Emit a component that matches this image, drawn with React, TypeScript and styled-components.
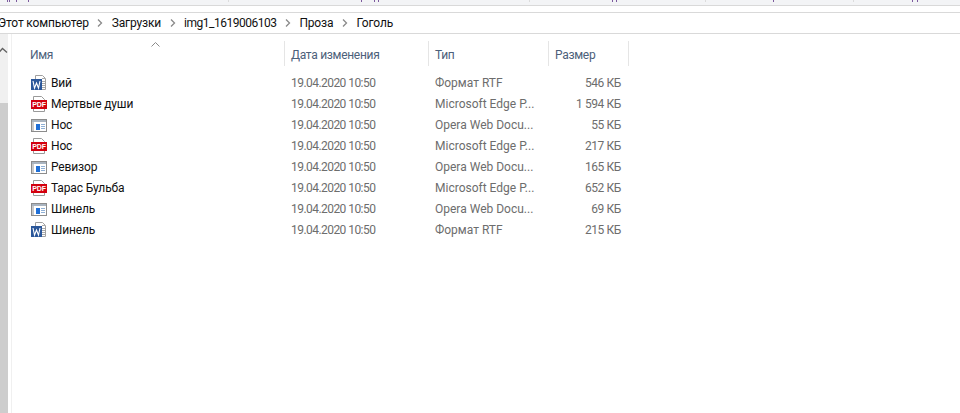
import styled, { createGlobalStyle } from "styled-components";

const GlobalStyle = createGlobalStyle`
  html, body {
    margin: 0;
    padding: 0;
    background: #fff;
    overflow: hidden;
  }

  body {
    font-family: Roboto, "Noto Sans", sans-serif;
  }
`;

const Page = styled.div`
  width: 960px;
  height: 413px;
  display: flex;
  flex-direction: column;
  overflow: hidden;
  background: #fff;
`;

const Ribbon = styled.div`
  height: 5px;
  flex: none;
  display: flex;
  position: relative;
  background: #f3f4f6;
  border-bottom: 1px solid #d9d9d9;
`;

const RibbonGroup = styled.div<{ $w: number }>`
  width: ${(p) => p.$w}px;
  height: 2px;
  flex: none;
  border-right: 1px solid #dcdcdc;
`;

const RibbonTick = styled.i<{ $x: number }>`
  position: absolute;
  left: ${(p) => p.$x}px;
  top: 0;
  width: 1px;
  height: 2px;
  background: #7d5a9e;
`;

const Crumbs = styled.div`
  height: 20px;
  flex: none;
  margin-top: 6px;
  display: flex;
  align-items: center;
  border-top: 1px solid #d9d9d9;
  border-bottom: 1px solid #d9d9d9;
  font-size: 12px;
  color: #111;
  white-space: nowrap;
`;

const CrumbList = styled.div`
  display: flex;
  align-items: center;
  margin-left: -2px;
`;

const Crumb = styled.span<{ $tight?: boolean }>`
  letter-spacing: ${(p) => (p.$tight ? "-0.5px" : "-0.15px")};
`;

const Chevron = styled.span`
  width: 23px;
  display: flex;
  justify-content: center;
`;

const Body = styled.div`
  flex: 1;
  display: flex;
  min-height: 0;
`;

const Scrollbar = styled.div`
  width: 8px;
  flex: none;
  display: flex;
  flex-direction: column;
  background: #f0f0f0;
`;

const ScrollArrow = styled.div`
  height: 69px;
  flex: none;
  padding-top: 13px;
  box-sizing: border-box;
  display: flex;
  justify-content: flex-start;
`;

const ScrollThumb = styled.div`
  flex: 1;
  background: #cdcdcd;
`;

const Files = styled.div`
  flex: 1;
  margin-left: 3px;
  border-left: 1px solid #f0f0f0;
  min-width: 0;
`;

const Header = styled.div`
  position: relative;
  height: 25px;
  margin-top: 7px;
  display: flex;
  color: #4c607a;
  font-size: 12px;
  letter-spacing: -0.3px;
`;

const SortMark = styled.svg`
  position: absolute;
  left: 139px;
  top: 1px;
`;

const HeaderCell = styled.div<{ $w: number }>`
  width: ${(p) => p.$w}px;
  box-sizing: border-box;
  padding: 6px 0 0 6px;
  border-right: 1px solid #e5e5e5;
  flex: none;
  line-height: 16px;

  &:first-of-type {
    padding-left: 18px;
  }
`;

const Rows = styled.div`
  margin-top: 6px;
  display: flex;
  flex-direction: column;
`;

const Row = styled.div`
  height: 21px;
  display: flex;
  align-items: center;
  font-size: 12px;
  color: #6d6d6d;
  white-space: nowrap;
`;

const NameCell = styled.div`
  width: 279px;
  flex: none;
  display: flex;
  align-items: center;
  gap: 4px;
  padding-left: 19px;
  box-sizing: border-box;
  color: #111;
  letter-spacing: -0.15px;
`;

const DateCell = styled.div`
  width: 144px;
  flex: none;
  letter-spacing: -0.55px;
`;

const TypeCell = styled.div`
  width: 120px;
  flex: none;
`;

const SizeCell = styled.div`
  width: 66px;
  flex: none;
  text-align: right;
  letter-spacing: -0.4px;
`;

type Kind = "word" | "pdf" | "opera";

const WordIcon = () => (
  <svg width="16" height="16" viewBox="0 0 16 16">
    <path d="M4.5.5h7l3 3v11h-10z" fill="#fff" stroke="#a0a0a0" />
    <path d="M11 3.5h3M11 6.500h3M11 8.500h3M11 10.500h3M11 12.500h3" stroke="#a9a9a9" />
    <rect x="0" y="4" width="11" height="11" fill="#2b579a" />
    <path d="M2 6l1.500 7 2-5 2 5L9 6" fill="none" stroke="#fff" strokeWidth="1.100" />
  </svg>
);

const PdfIcon = () => (
  <svg width="16" height="16" viewBox="0 0 16 16">
    <path d="M2.500.5h8l3 3v1h-11z" fill="#fff" stroke="#9a9a9a" />
    <path d="M2.500 12.500h11v3h-11z" fill="#fff" stroke="#9a9a9a" />
    <rect x="0" y="4" width="16" height="9" fill="#d3000f" />
    <text x="8" y="11" textAnchor="middle" fontFamily="Liberation Sans, sans-serif" fontWeight="700" fontSize="7" fill="#fff">
      PDF
    </text>
  </svg>
);

const OperaIcon = () => (
  <svg width="16" height="16" viewBox="0 0 16 16">
    <rect x="0.500" y="2.500" width="15" height="12" fill="#fff" stroke="#8c8c8c" />
    <rect x="1" y="3" width="14" height="2" fill="#a9b4c0" />
    <rect x="1" y="5" width="2" height="9" fill="#c9c9c9" />
    <rect x="5" y="7" width="4" height="6" fill="#1f6fd6" />
    <path d="M10 7.500h4M10 9.500h4M10 11.500h4" stroke="#8fb0d6" />
  </svg>
);

const icons: Record<Kind, () => React.JSX.Element> = {
  word: WordIcon,
  pdf: PdfIcon,
  opera: OperaIcon,
};

const ribbonGroups = [228, 300, 175, 147];
const ribbonTicks = [7, 9, 16, 28, 361, 374, 378, 612, 616, 773, 912, 917];

const path = ["Этот компьютер", "Загрузки", "img1_1619006103", "Проза", "Гоголь"];

const files: { kind: Kind; name: string; type: string; size: string }[] = [
  { kind: "word", name: "Вий", type: "Формат RTF", size: "546 КБ" },
  { kind: "pdf", name: "Мертвые души", type: "Microsoft Edge P...", size: "1 594 КБ" },
  { kind: "opera", name: "Нос", type: "Opera Web Docu...", size: "55 КБ" },
  { kind: "pdf", name: "Нос", type: "Microsoft Edge P...", size: "217 КБ" },
  { kind: "opera", name: "Ревизор", type: "Opera Web Docu...", size: "165 КБ" },
  { kind: "pdf", name: "Тарас Бульба", type: "Microsoft Edge P...", size: "652 КБ" },
  { kind: "opera", name: "Шинель", type: "Opera Web Docu...", size: "69 КБ" },
  { kind: "word", name: "Шинель", type: "Формат RTF", size: "215 КБ" },
];

const App = () => (
  <Page>
    <GlobalStyle />
    <Ribbon>
      {ribbonGroups.map((w, i) => (
        <RibbonGroup key={i} $w={w} />
      ))}
      {ribbonTicks.map((x) => (
        <RibbonTick key={x} $x={x} />
      ))}
    </Ribbon>
    <Crumbs>
      <CrumbList>
        {path.map((part, i) => (
          <span key={part} style={{ display: "contents" }}>
            {i > 0 && (
              <Chevron>
                <svg width="6" height="8" viewBox="0 0 6 8">
                  <path d="M1 0.500L4.500 4 1 7.500" fill="none" stroke="#8a8a8a" strokeWidth="1.300" />
                </svg>
              </Chevron>
            )}
            <Crumb $tight={i === 2}>{part}</Crumb>
          </span>
        ))}
      </CrumbList>
    </Crumbs>
    <Body>
      <Scrollbar>
        <ScrollArrow>
          <svg width="8" height="6" viewBox="0 0 8 6">
            <path d="M-1 5.500L2.500 1.500 7 5.500" fill="none" stroke="#606060" strokeWidth="1.300" />
          </svg>
        </ScrollArrow>
        <ScrollThumb />
      </Scrollbar>
      <Files>
        <Header>
          <SortMark width="9" height="5" viewBox="0 0 9 5">
            <path d="M.5 4.500L4.500.5l4 4" fill="none" stroke="#8a8a8a" />
          </SortMark>
          <HeaderCell $w={273}>Имя</HeaderCell>
          <HeaderCell $w={144}>Дата изменения</HeaderCell>
          <HeaderCell $w={120}>Тип</HeaderCell>
          <HeaderCell $w={80}>Размер</HeaderCell>
        </Header>
        <Rows>
          {files.map((f, i) => {
            const Icon = icons[f.kind];
            return (
              <Row key={i}>
                <NameCell>
                  <Icon />
                  {f.name}
                </NameCell>
                <DateCell>19.04.2020 10:50</DateCell>
                <TypeCell>{f.type}</TypeCell>
                <SizeCell>{f.size}</SizeCell>
              </Row>
            );
          })}
        </Rows>
      </Files>
    </Body>
  </Page>
);

export default App;
